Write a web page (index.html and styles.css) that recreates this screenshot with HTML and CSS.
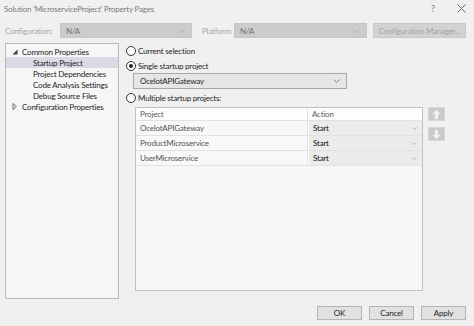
FILE: index.html
```html
<!DOCTYPE html>
<html lang="en">
<head>
  <meta charset="UTF-8">
  <title>Solution 'MicroserviceProject' Property Pages</title>
  <link rel="stylesheet" href="styles.css">
</head>
<body>
  <div class="dialog">

    <div class="titlebar">
      <span class="title">Solution 'MicroserviceProject' Property Pages</span>
      <span class="title-btn help">?</span>
      <span class="title-btn close">
        <svg width="9" height="9" viewBox="0 0 9 9"><path d="M0.5 0.5 L8.5 8.5 M8.5 0.5 L0.5 8.5" stroke="#6a6a6a" stroke-width="1" fill="none"/></svg>
      </span>
    </div>

    <div class="config-row">
      <span class="config-label">Configuration:</span>
      <div class="combo combo-disabled combo-config">
        <span>N/A</span>
        <svg class="chev" width="7" height="4" viewBox="0 0 7 4"><path d="M0.5 0.5 L3.5 3.5 L6.5 0.5" stroke="#b0b0b0" fill="none"/></svg>
      </div>
      <span class="config-label platform">Platform:</span>
      <div class="combo combo-disabled combo-platform">
        <span>N/A</span>
        <svg class="chev" width="7" height="4" viewBox="0 0 7 4"><path d="M0.5 0.5 L3.5 3.5 L6.5 0.5" stroke="#b0b0b0" fill="none"/></svg>
      </div>
      <div class="btn btn-disabled config-manager">Configuration Manager...</div>
    </div>

    <div class="main">
      <!-- Property tree -->
      <div class="tree">
        <div class="tree-item">
          <svg class="arrow" width="6" height="6" viewBox="0 0 6 6"><path d="M5.5 0.5 L5.5 5.5 L0.5 5.5 Z" fill="#3c3c3c"/></svg>
          <span>Common Properties</span>
        </div>
        <div class="tree-item child selected"><span>Startup Project</span></div>
        <div class="tree-item child"><span>Project Dependencies</span></div>
        <div class="tree-item child"><span>Code Analysis Settings</span></div>
        <div class="tree-item child"><span>Debug Source Files</span></div>
        <div class="tree-item">
          <svg class="arrow" width="6" height="7" viewBox="0 0 6 7"><path d="M1 0.5 L4.5 3.5 L1 6.5 Z" fill="none" stroke="#6a6a6a"/></svg>
          <span>Configuration Properties</span>
        </div>
      </div>

      <!-- Startup project page -->
      <div class="page">
        <label class="radio-row">
          <span class="radio"></span>
          <span>Current selection</span>
        </label>
        <label class="radio-row single">
          <span class="radio checked"></span>
          <span>Single startup project</span>
        </label>
        <div class="combo combo-project">
          <span>OcelotAPIGateway</span>
          <svg class="chev" width="7" height="4" viewBox="0 0 7 4"><path d="M0.5 0.5 L3.5 3.5 L6.5 0.5" stroke="#8a8a8a" fill="none"/></svg>
        </div>
        <label class="radio-row multiple">
          <span class="radio"></span>
          <span>Multiple startup projects:</span>
        </label>

        <div class="grid-area">
          <div class="grid">
            <div class="grid-row grid-head">
              <div class="cell">Project</div>
              <div class="cell action">Action</div>
            </div>
            <div class="grid-row">
              <div class="cell name">OcelotAPIGateway</div>
              <div class="cell action value">Start<svg class="chev" width="5" height="3" viewBox="0 0 5 3"><path d="M0.5 0.5 L2.5 2.5 L4.5 0.5" stroke="#b8b8b8" fill="none"/></svg></div>
            </div>
            <div class="grid-row">
              <div class="cell name">ProductMicroservice</div>
              <div class="cell action value">Start<svg class="chev" width="5" height="3" viewBox="0 0 5 3"><path d="M0.5 0.5 L2.5 2.5 L4.5 0.5" stroke="#b8b8b8" fill="none"/></svg></div>
            </div>
            <div class="grid-row">
              <div class="cell name">UserMicroservice</div>
              <div class="cell action value">Start<svg class="chev" width="5" height="3" viewBox="0 0 5 3"><path d="M0.5 0.5 L2.5 2.5 L4.5 0.5" stroke="#b8b8b8" fill="none"/></svg></div>
            </div>
          </div>

          <div class="move-btns">
            <div class="move-btn">
              <svg width="11" height="11" viewBox="0 0 11 11"><path d="M5.5 1 L9.5 5 L7 5 L7 10 L4 10 L4 5 L1.5 5 Z" fill="#f4f4f4" stroke="#e0e0e0" stroke-width="0.6"/></svg>
            </div>
            <div class="move-btn">
              <svg width="11" height="11" viewBox="0 0 11 11"><path d="M5.5 10 L9.5 6 L7 6 L7 1 L4 1 L4 6 L1.5 6 Z" fill="#f4f4f4" stroke="#e0e0e0" stroke-width="0.6"/></svg>
            </div>
          </div>
        </div>
      </div>
    </div>

    <div class="footer">
      <div class="btn">OK</div>
      <div class="btn">Cancel</div>
      <div class="btn">Apply</div>
    </div>
  </div>
</body>
</html>
```

FILE: styles.css
```css
html, body {
  margin: 0;
  padding: 0;
  background: #f0f0f0;
  font-family: 'Lato', 'Noto Sans', sans-serif;
  font-size: 8px;
  letter-spacing: -0.2px;
  color: #1e1e1e;
  white-space: nowrap;
  overflow: hidden;
}

.dialog {
  width: 474px;
  height: 326px;
  display: flex;
  flex-direction: column;
}

/* Title bar */
.titlebar {
  height: 17px;
  display: flex;
  align-items: center;
  padding: 0 8px 0 4px;
}

.title {
  flex: 1;
  color: #7a7a7a;
}

.title-btn {
  color: #7a7a7a;
  display: flex;
  align-items: center;
  justify-content: center;
}

.help {
  width: 10px;
  margin-right: 19px;
  font-size: 9px;
}

/* Configuration row */
.config-row {
  margin-top: 6px;
  height: 15px;
  display: flex;
  align-items: center;
  padding-left: 5px;
}

.config-label {
  color: #a6a6a6;
  width: 55px;
}

.config-label.platform {
  width: 32px;
  margin-left: 10px;
}

.combo {
  height: 15px;
  box-sizing: border-box;
  display: flex;
  align-items: center;
  padding: 0 6px 0 5px;
  border: 1px solid #c4c4c4;
}

.combo span {
  flex: 1;
}

.combo-disabled {
  background: #cccccc;
  border-color: #c6c6c6;
  color: #727272;
}

.combo-config {
  width: 132px;
}

.combo-platform {
  width: 133px;
}

.btn {
  height: 14px;
  box-sizing: border-box;
  display: flex;
  align-items: center;
  justify-content: center;
  background: #e1e1e1;
  border: 1px solid #b4b4b4;
  color: #1e1e1e;
}

.btn-disabled {
  background: #d2d2d2;
  border-color: #c8c8c8;
  color: #a2a2a2;
}

.config-manager {
  width: 93px;
  height: 15px;
  margin-left: 6px;
}

/* Main area */
.main {
  margin-top: 5px;
  height: 256px;
  display: flex;
  padding-left: 5px;
}

.tree {
  width: 114px;
  box-sizing: border-box;
  border: 1px solid #b9b9b9;
  background: #f6f6f6;
  padding-top: 2px;
}

.tree-item {
  height: 11px;
  display: flex;
  align-items: center;
  padding-left: 6px;
}

.tree-item .arrow {
  width: 6px;
  margin-right: 4px;
}

.tree-item.child {
  padding-left: 27px;
}

.tree-item.selected {
  background: #dadae4;
}

.page {
  flex: 1;
  padding-left: 7px;
  display: flex;
  flex-direction: column;
}

.radio-row {
  height: 11px;
  display: flex;
  align-items: center;
  gap: 2px;
  margin-top: 2px;
}

.radio-row.single {
  margin-top: 4px;
}

.radio-row.multiple {
  margin-top: 3px;
}

.radio {
  width: 8px;
  height: 8px;
  border: 1px solid #333;
  border-radius: 50%;
  background: #fff;
  position: relative;
}

.radio.checked::after {
  content: '';
  position: absolute;
  left: 2px;
  top: 2px;
  width: 4px;
  height: 4px;
  border-radius: 50%;
  background: #222;
}

.combo-project {
  width: 214px;
  height: 16px;
  margin-top: 2px;
  margin-left: 7px;
  padding-left: 6px;
  background: #e6e6e6;
  border-color: #a8a8a8;
}

/* Startup grid */
.grid-area {
  margin-top: 4px;
  display: flex;
  gap: 5px;
  padding-left: 9px;
}

.grid {
  width: 288px;
  height: 184px;
  box-sizing: border-box;
  border: 1px solid #c0c0c0;
  background: #f7f7f7;
}

.grid-row {
  height: 15px;
  display: flex;
  border-bottom: 1px solid #e2e2e2;
  box-sizing: border-box;
}

.grid-head {
  height: 13px;
  background: #fdfdfd;
  color: #5a5a5a;
}

.cell {
  width: 172px;
  display: flex;
  align-items: center;
  padding-left: 4px;
  box-sizing: border-box;
  border-right: 1px solid #e2e2e2;
}

.cell.name {
  color: #555;
  background: #f8f8f8;
}

.cell.action {
  flex: 1;
  border-right: none;
}

.cell.value {
  background: #ebebeb;
  color: #111;
  justify-content: space-between;
  padding-right: 5px;
  border-left: 1px solid #fff;
}

.move-btns {
  display: flex;
  flex-direction: column;
  gap: 6px;
}

.move-btn {
  width: 17px;
  height: 14px;
  box-sizing: border-box;
  background: #c9c9c9;
  border: 1px solid #d6d6d6;
  display: flex;
  align-items: center;
  justify-content: center;
}

/* Dialog buttons */
.footer {
  margin-top: 7px;
  display: flex;
  justify-content: flex-end;
  gap: 7px;
  padding-right: 8px;
}

.footer .btn {
  width: 45px;
}
```
